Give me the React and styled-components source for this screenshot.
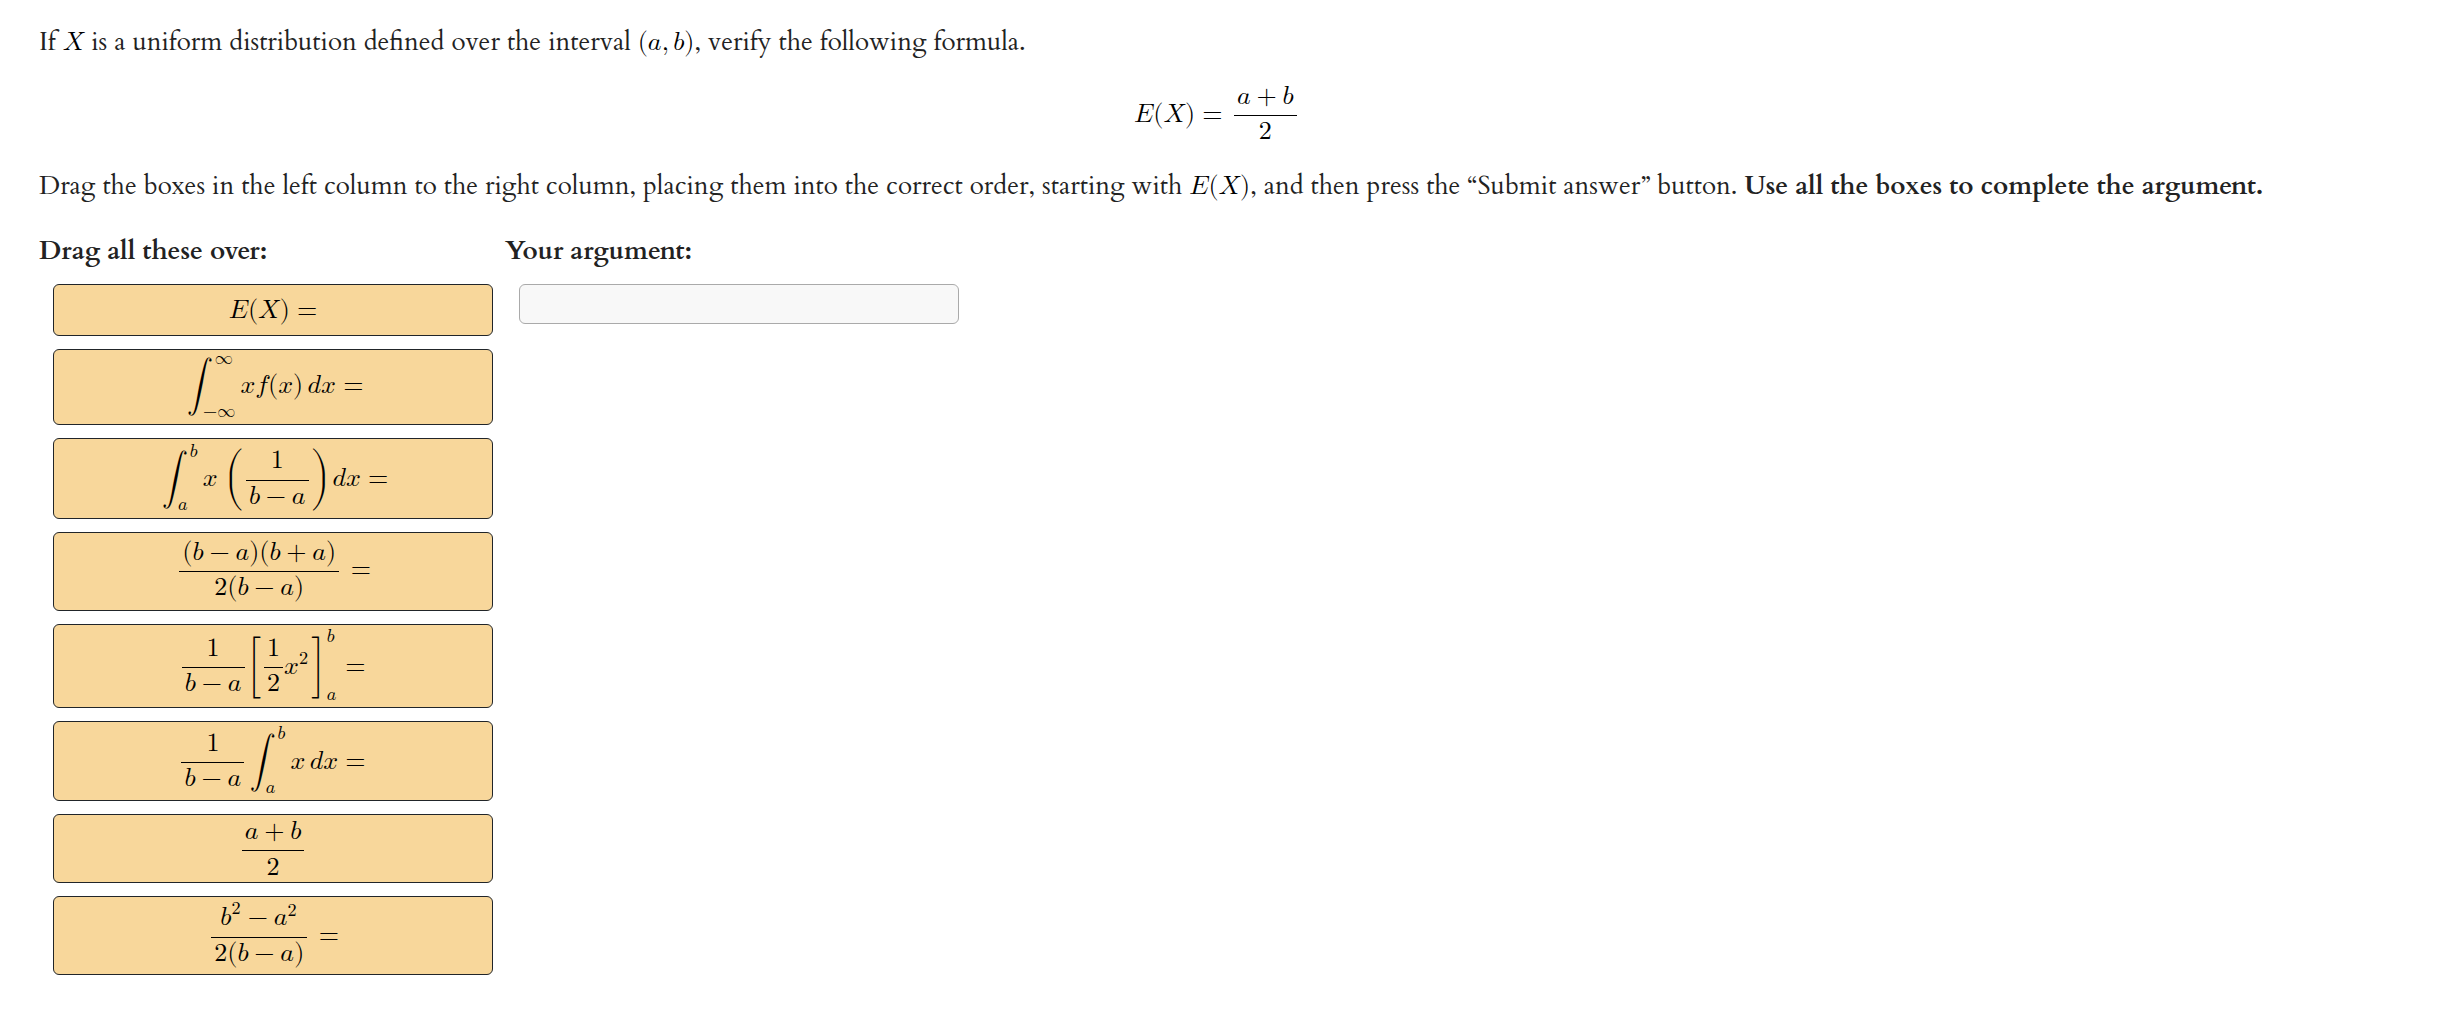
import React from "react";
import styled, { createGlobalStyle } from "styled-components";

const GlobalStyle = createGlobalStyle`
  body { margin: 0; background: #fff; }
`;

const Page = styled.main`
  padding: 25px 48px 24px 39px;
  color: #222;
  font-family: Cardo, "EB Garamond", "Liberation Serif", "Times New Roman", serif;
  font-size: 26px;
  line-height: 34px;
`;
const Paragraph = styled.p`
  margin: 0;
`;
const Display = styled.div`
  display: flex;
  justify-content: center;
  margin: 27px 0 30px;
`;
const Columns = styled.div`
  display: flex;
  margin-top: 31px;
`;
const Column = styled.section`
  flex: none;
  width: 466px;
`;
const Heading = styled.h2`
  margin: 0 0 16px;
  font-size: 26px;
  line-height: 34px;
  font-weight: 700;
`;
const List = styled.ul`
  display: flex;
  flex-direction: column;
  gap: 13px;
  margin: 0 12px 0 14px;
  padding: 0;
  list-style: none;
`;
const Tile = styled.li`
  display: flex;
  align-items: center;
  justify-content: center;
  box-sizing: border-box;
  min-height: ${(p) => p.$height}px;
  padding: ${(p) => p.$above || 0}px 0 ${(p) => p.$below || 0}px;
  border: 1px solid #212529;
  border-radius: 6px;
  background: #f8d79b;
  cursor: grab;
`;
const DropZone = styled.div`
  box-sizing: border-box;
  height: 40px;
  margin: 0 12px 0 14px;
  border: 1px solid #aaa;
  border-radius: 6px;
  background: #f8f8f8;
`;
const Formula = styled("math")`
  color: #000;
  font-family: "Latin Modern Math", "Liberation Serif", "Times New Roman", serif;
  font-size: 26px;
`;
const Limits = styled("msubsup")`
  margin-right: -${(p) => p.$pull}px;
`;

const Open = () => <mo stretchy="false">(</mo>;
const Close = () => <mo stretchy="false">)</mo>;
const Equals = () => <mo lspace="0.278em" rspace="0">=</mo>;
const Thin = () => <mspace width="0.167em" />;
const Edge = () => <mspace width="0.12em" />;
const Fraction = ({ top, bottom, tight }) => (
  <mrow>
    {!tight && <Edge />}
    <mfrac>
      <mrow><Edge />{top}<Edge /></mrow>
      <mrow><Edge />{bottom}<Edge /></mrow>
    </mfrac>
    {!tight && <Edge />}
  </mrow>
);
const EX = () => (
  <>
    <mi>E</mi><Open /><mi>X</mi><Close />
  </>
);
const Binary = ({ left, op, right }) => (
  <mrow>
    <mi>{left}</mi><mo>{op}</mo><mi>{right}</mi>
  </mrow>
);
const OneOverWidth = ({ tight }) => (
  <Fraction tight={tight} top={<mn>1</mn>} bottom={<Binary left="b" op="−" right="a" />} />
);
const TwiceWidth = () => (
  <mrow>
    <mn>2</mn><Open /><Binary left="b" op="−" right="a" /><Close />
  </mrow>
);
const Mean = () => (
  <Fraction top={<Binary left="a" op="+" right="b" />} bottom={<mn>2</mn>} />
);
const Squared = ({ of }) => (
  <msup>
    <mi>{of}</mi>
    <mn>2</mn>
  </msup>
);
const Integral = ({ from, to, pull }) => (
  <Limits $pull={pull}>
    <mo>∫</mo>
    <mpadded voffset="4px"><mspace width="0.3em" />{from}</mpadded>
    <mrow><mspace width="0.1em" />{to}</mrow>
  </Limits>
);
const IntegralAB = () => <Integral from={<mi>a</mi>} to={<mi>b</mi>} pull={6} />;

const tiles = [
  { height: 52, above: 2, body: <><EX /><Equals /></> },
  {
    height: 76,
    above: 2,
    body: (
      <>
        <Integral from={<><mo form="prefix" lspace="0" rspace="0">−</mo><mi>∞</mi></>} to={<mi>∞</mi>} pull={16} />
        <mi>x</mi><mi>f</mi><Open /><mi>x</mi><Close /><Thin /><mi>d</mi><mi>x</mi><Equals />
      </>
    ),
  },
  {
    height: 81,
    body: (
      <>
        <IntegralAB /><mi>x</mi><Thin />
        <mrow><mo>(</mo><OneOverWidth tight /><mo>)</mo></mrow>
        <mi>d</mi><mi>x</mi><Equals />
      </>
    ),
  },
  {
    height: 79,
    below: 2,
    body: (
      <>
        <Fraction
          top={
            <>
              <Open /><Binary left="b" op="−" right="a" /><Close />
              <Open /><Binary left="b" op="+" right="a" /><Close />
            </>
          }
          bottom={<TwiceWidth />}
        />
        <Equals />
      </>
    ),
  },
  {
    height: 84,
    body: (
      <>
        <OneOverWidth tight />
        <msubsup>
          <mrow>
            <mo>[</mo>
            <Fraction tight top={<mn>1</mn>} bottom={<mn>2</mn>} />
            <Squared of="x" />
            <mo>]</mo>
          </mrow>
          <mpadded voffset="4px"><mi>a</mi></mpadded>
          <mi>b</mi>
        </msubsup>
        <Equals />
      </>
    ),
  },
  { height: 80, body: <><OneOverWidth tight /><IntegralAB /><mi>x</mi><Thin /><mi>d</mi><mi>x</mi><Equals /></> },
  { height: 69, below: 2, body: <Mean /> },
  {
    height: 79,
    below: 2,
    body: (
      <>
        <Fraction
          top={<><Squared of="b" /><mo>−</mo><Squared of="a" /></>}
          bottom={<TwiceWidth />}
        />
        <Equals />
      </>
    ),
  },
];

export default function App() {
  return (
    <>
      <GlobalStyle />
      <Page>
        <Paragraph>
          If <Formula><mi>X</mi></Formula> is a uniform distribution defined over the interval{" "}
          <Formula><Open /><mi>a</mi><mo separator="true" lspace="0" rspace="0.167em">,</mo><mi>b</mi><Close /></Formula>, verify the
          following formula.
        </Paragraph>
        <Display>
          <Formula displaystyle="true"><EX /><mo>=</mo><Mean /></Formula>
        </Display>
        <Paragraph>
          Drag the boxes in the left column to the right column, placing them into the correct order, starting with{" "}
          <Formula><EX /></Formula>, and then press the “Submit answer” button.{" "}
          <strong>Use all the boxes to complete the argument.</strong>
        </Paragraph>
        <Columns>
          <Column>
            <Heading>Drag all these over:</Heading>
            <List>
              {tiles.map((tile, i) => (
                <Tile key={i} $height={tile.height} $above={tile.above} $below={tile.below} draggable>
                  <Formula displaystyle="true">{tile.body}</Formula>
                </Tile>
              ))}
            </List>
          </Column>
          <Column>
            <Heading>Your argument:</Heading>
            <DropZone />
          </Column>
        </Columns>
      </Page>
    </>
  );
}
